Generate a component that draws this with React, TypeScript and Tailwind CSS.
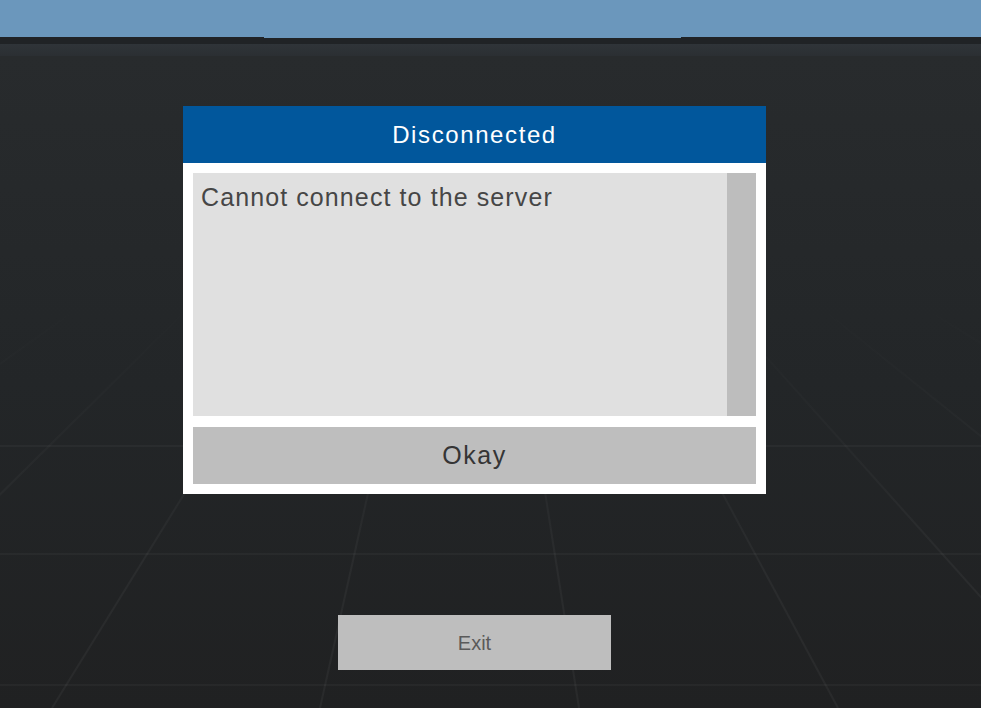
import React from "react";

const VP = { x: 472, y: 28 };
const groundXs = [-760, -484, -216, 52, 320, 579, 838, 1080, 1320, 1570];
const rowYs = [446, 554, 685];

// faint perspective floor grid behind the dialog
const FloorGrid = () => (
  <svg className="absolute inset-0" width={981} height={708} viewBox="0 0 981 708">
    <defs>
      <linearGradient id="fade" gradientUnits="userSpaceOnUse" x1="0" y1="300" x2="0" y2="560">
        <stop offset="0" stopColor="#ffffff" stopOpacity="0" />
        <stop offset="1" stopColor="#ffffff" stopOpacity="0.04" />
      </linearGradient>
    </defs>
    {groundXs.map((x) => (
      <line key={x} x1={VP.x} y1={VP.y} x2={x} y2={708} stroke="url(#fade)" strokeWidth={2} />
    ))}
    {rowYs.map((y) => (
      <line key={y} x1={0} y1={y} x2={981} y2={y} stroke="#ffffff" strokeOpacity={0.035} strokeWidth={2} />
    ))}
  </svg>
);

const Scene = () => (
  <div className="absolute inset-0 flex flex-col overflow-hidden">
    <div className="h-[37px] shrink-0 bg-[#6b97bc]" />
    <div className="flex h-px shrink-0">
      <div className="w-[264px] bg-[#202326]" />
      <div className="w-[417px] bg-[#6b97bc]" />
      <div className="flex-1 bg-[#202326]" />
    </div>
    <div className="h-[6px] shrink-0 bg-[#202326]" />
    <div className="h-[12px] shrink-0 bg-gradient-to-b from-[#2f3439] to-[#2b2f33]" />
    <div className="relative flex-1 bg-gradient-to-b from-[#282b2d] via-[#232628] to-[#202122]" />
    <FloorGrid />
  </div>
);

export default function App() {
  return (
    <div
      className="relative h-[708px] w-[981px] overflow-hidden"
      style={{ fontFamily: '"Liberation Sans", Arial, sans-serif' }}
    >
      <Scene />
      <div className="relative flex w-[949px] flex-col items-center pt-[106px]">
        <div className="w-[583px] bg-white">
          <div className="flex h-[57px] items-center justify-center bg-[#01579c] text-[24px] leading-none tracking-[1.6px] text-white">
            Disconnected
          </div>
          <div className="flex flex-col gap-[11px] p-[10px]">
            <div className="flex h-[243px]">
              <div className="flex-1 bg-[#e0e0e0] px-2 pt-[12px] text-[25px] leading-none tracking-[1.1px] text-[#464646]">
                Cannot connect to the server
              </div>
              <div className="w-[29px] bg-[#bdbdbd]" />
            </div>
            <button className="flex h-[57px] items-center justify-center bg-[#bebebe] text-[25px] leading-none tracking-[1.5px] text-[#353535]">
              Okay
            </button>
          </div>
        </div>
        <button className="mt-[121px] flex h-[55px] w-[273px] items-center justify-center bg-[#bebebe] text-[20px] leading-none text-[#5a5a5a]">
          Exit
        </button>
      </div>
    </div>
  );
}
